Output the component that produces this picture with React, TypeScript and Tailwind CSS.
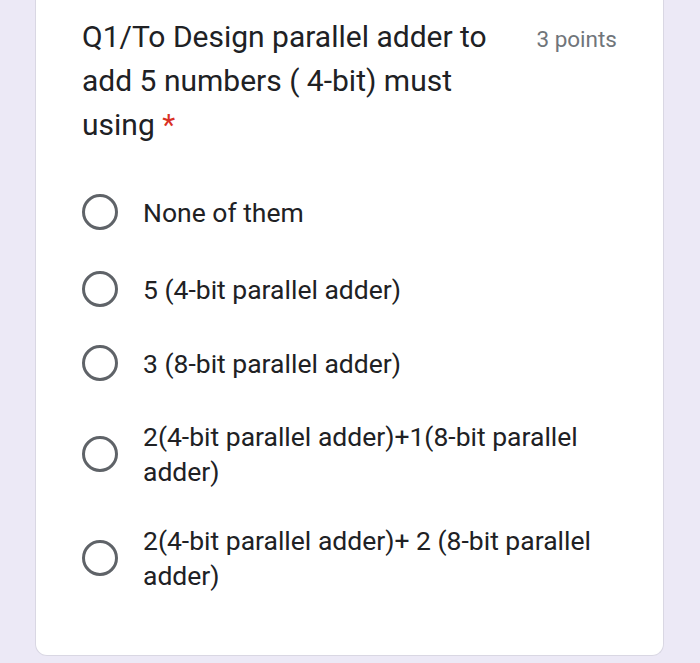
import React from 'react';

// spacing before each choice row, tuned to the screenshot
const options = [
  { text: 'None of them', gap: 'mt-0' },
  { text: '5 (4-bit parallel adder)', gap: 'mt-[41px]' },
  { text: '3 (8-bit parallel adder)', gap: 'mt-[38px]' },
  { text: '2(4-bit parallel adder)+1(8-bit parallel adder)', gap: 'mt-[38px]' },
  { text: '2(4-bit parallel adder)+ 2 (8-bit parallel adder)', gap: 'mt-[34px]' },
];

function Radio() {
  return (
    <span className="block h-[36px] w-[36px] shrink-0 rounded-full border-[3.5px] border-[#5f6368]" />
  );
}

export default function App() {
  return (
    <div
      className="flex h-[663px] w-[700px] flex-col overflow-hidden bg-[#ece9f6]"
      style={{ fontFamily: 'Roboto, "Noto Sans", sans-serif' }}
    >
      <div className="ml-[35px] h-[656px] w-[629px] rounded-b-[12px] border border-t-0 border-[#d9d7e3] bg-white px-[46px]">
        {/* Question header */}
        <div className="flex items-start justify-between pt-[15px]">
          <h2 className="w-[425px] text-[30px] leading-[44px] text-[#202124]">
            Q1/To Design parallel adder to add 5 numbers ( 4-bit) must using{' '}
            <span className="text-[#d93025]">*</span>
          </h2>
          <span className="pt-[9px] text-[22.5px] leading-[30px] text-[#70757a]">3 points</span>
        </div>

        {/* Choices */}
        <div className="mt-[47px] flex flex-col">
          {options.map((opt) => (
            <label key={opt.text} className={`flex items-center gap-[25px] ${opt.gap}`}>
              <Radio />
              <span className="text-[26.5px] leading-[35px] text-[#202124]">{opt.text}</span>
            </label>
          ))}
        </div>
      </div>
    </div>
  );
}
